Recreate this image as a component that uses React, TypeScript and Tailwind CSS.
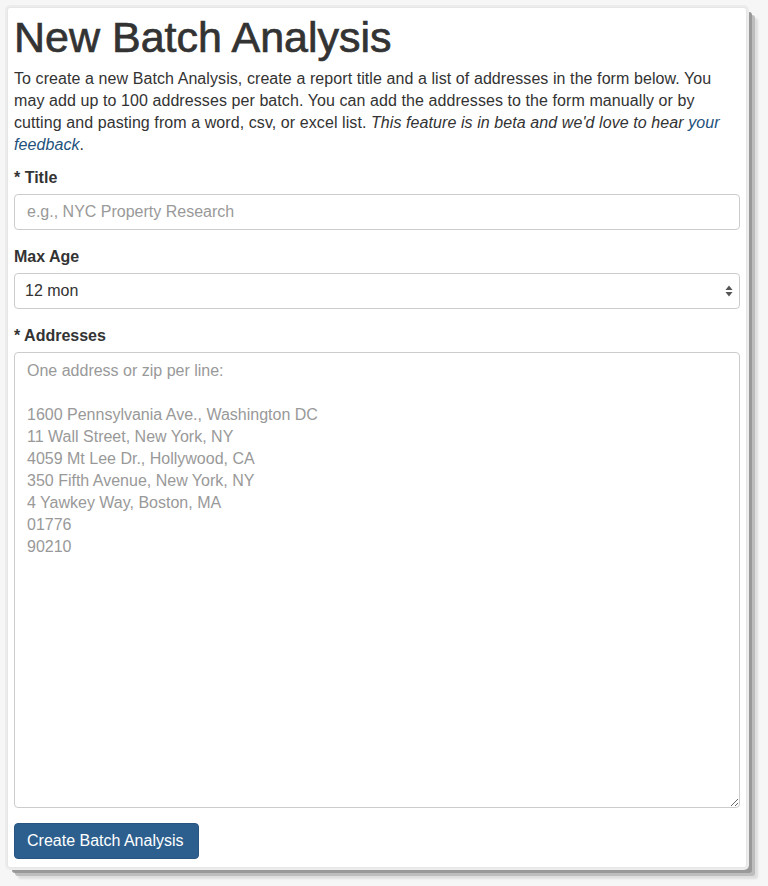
import React from "react";

export default function App() {
  const addresses = [
    "One address or zip per line:",
    "",
    "1600 Pennsylvania Ave., Washington DC",
    "11 Wall Street, New York, NY",
    "4059 Mt Lee Dr., Hollywood, CA",
    "350 Fifth Avenue, New York, NY",
    "4 Yawkey Way, Boston, MA",
    "01776",
    "90210",
  ].join("\n");

  return (
    <div
      className="w-[768px] h-[886px] bg-[#f6f6f6] pt-[7px] pl-[7px]"
      style={{ fontFamily: '"Liberation Sans", Arial, sans-serif' }}
    >
      <div className="w-[740px] h-[861px] bg-white rounded-[3px] border border-[#e6e6e6] px-[6px] flex flex-col text-[#333] shadow-[0_0_0_2px_#ececec,5px_5px_0_#999999,8px_8px_0_#bdbdbd,11px_11px_2px_#dedede]">
        <h1 className="text-[43px] leading-[48px] mt-[5px] text-[#333] font-normal [-webkit-text-stroke:0.7px_#333] whitespace-nowrap">
          New Batch Analysis
        </h1>
        <p className="text-[16px] leading-[22px] mt-[7px] text-[#333] tracking-[0.08px] whitespace-nowrap">
          To create a new Batch Analysis, create a report title and a list of addresses in the form below. You
          <br />
          may add up to 100 addresses per batch. You can add the addresses to the form manually or by
          <br />
          cutting and pasting from a word, csv, or excel list.{" "}
          <em>
            This feature is in beta and we'd love to hear{" "}
            <a className="text-[#23527c]" href="#">
              your
            </a>
          </em>
          <br />
          <em>
            <a className="text-[#23527c]" href="#">
              feedback
            </a>
          </em>
          .
        </p>

        <label className="block font-bold text-[16px] leading-[22px] mt-[11px]">* Title</label>
        <input
          className="mt-[5px] h-[36px] w-full border border-[#cccccc] rounded-[4px] px-[12px] text-[16px] placeholder:text-[#999] outline-none"
          placeholder="e.g., NYC Property Research"
        />

        <label className="block font-bold text-[16px] leading-[22px] mt-[16px]">Max Age</label>
        <div className="relative mt-[5px] h-[36px] w-full border border-[#cccccc] rounded-[4px] px-[10px] flex items-center text-[16px] text-[#333]">
          <span>12 mon</span>
          <svg
            className="absolute right-[6px] top-1/2 -translate-y-1/2"
            width="8"
            height="12"
            viewBox="0 0 8 12"
          >
            <path d="M4 0.5 L7.5 5 L0.5 5 Z" fill="#555" />
            <path d="M4 11.5 L7.5 7 L0.5 7 Z" fill="#555" />
          </svg>
        </div>

        <label className="block font-bold text-[16px] leading-[22px] mt-[16px]">* Addresses</label>
        <textarea
          className="mt-[5px] h-[456px] w-full border border-[#cccccc] rounded-[4px] px-[12px] py-[7px] text-[16px] leading-[22px] placeholder:text-[#999] outline-none resize-y"
          placeholder={addresses}
        />

        <div className="mt-[15px]">
          <button className="h-[36px] w-[185px] rounded-[4px] bg-[#2d5f8e] text-white text-[16px] border border-[#285582] text-left pl-[12px]">
            Create Batch Analysis
          </button>
        </div>
      </div>
    </div>
  );
}
